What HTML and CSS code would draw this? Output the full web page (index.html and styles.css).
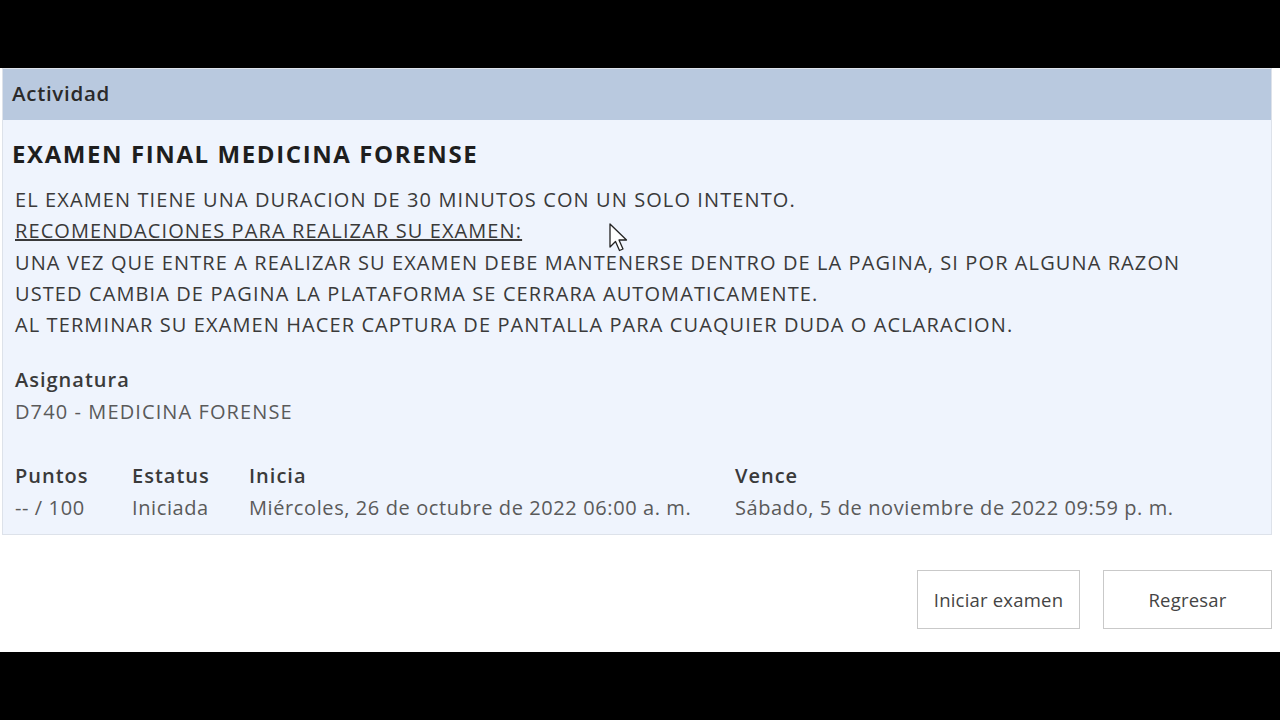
FILE: index.html
```html
<!DOCTYPE html>
<html lang="es">
<head>
    <meta charset="UTF-8">
    <meta name="viewport" content="width=device-width, initial-scale=1.0">
    <title>Actividad</title>
    <link rel="stylesheet" href="styles.css">
</head>
<body>
    <div class="bar-top"></div>

    <div class="page">
        <div class="card">
            <div class="card-header">Actividad</div>
            <div class="card-body">
                <h2 class="title">EXAMEN FINAL MEDICINA FORENSE</h2>
                <div class="description">
                    <p>EL EXAMEN TIENE UNA DURACION DE 30 MINUTOS CON UN SOLO INTENTO.</p>
                    <p><u>RECOMENDACIONES PARA REALIZAR SU EXAMEN:</u></p>
                    <p>UNA VEZ QUE ENTRE A REALIZAR SU EXAMEN DEBE MANTENERSE DENTRO DE LA PAGINA, SI POR ALGUNA RAZON<br>USTED CAMBIA DE PAGINA LA PLATAFORMA SE CERRARA AUTOMATICAMENTE.</p>
                    <p>AL TERMINAR SU EXAMEN HACER CAPTURA DE PANTALLA PARA CUAQUIER DUDA O ACLARACION.</p>
                </div>

                <div class="field">
                    <div class="label">Asignatura</div>
                    <div class="value upper">D740 - MEDICINA FORENSE</div>
                </div>

                <div class="details">
                    <div class="field col-puntos">
                        <div class="label">Puntos</div>
                        <div class="value">-- / 100</div>
                    </div>
                    <div class="field col-estatus">
                        <div class="label">Estatus</div>
                        <div class="value">Iniciada</div>
                    </div>
                    <div class="field col-inicia">
                        <div class="label">Inicia</div>
                        <div class="value">Miércoles, 26 de octubre de 2022 06:00 a. m.</div>
                    </div>
                    <div class="field">
                        <div class="label">Vence</div>
                        <div class="value">Sábado, 5 de noviembre de 2022 09:59 p. m.</div>
                    </div>
                </div>
            </div>
        </div>

        <div class="actions">
            <button class="btn btn-start">Iniciar examen</button>
            <button class="btn btn-back">Regresar</button>
        </div>

        <!-- mouse pointer visible in the capture -->
        <svg class="pointer" width="22" height="30" viewBox="0 0 22 30">
            <path d="M1 1 L1 24 L6.5 18.5 L10.5 27.5 L14 26 L10 17 L17.5 17 Z" fill="#fff" stroke="#222" stroke-width="1.3" stroke-linejoin="round"/>
        </svg>
    </div>

    <div class="bar-bottom"></div>
</body>
</html>
```

FILE: styles.css
```css
* {
    box-sizing: border-box;
    font-family: "Open Sans", "Noto Sans", Arial, sans-serif;
}

body {
    margin: 0;
    width: 1280px;
    height: 720px;
    background-color: #000;
    overflow: hidden;
}

.bar-top {
    height: 68px;
    background-color: #000;
}

.bar-bottom {
    height: 68px;
    background-color: #000;
}

.page {
    position: relative;
    height: 584px;
    background-color: #fff;
    padding: 0 8px 0 2px;
}

.card {
    border: 1px solid #dde2ea;
    background-color: #eff4fd;
}

.card-header {
    height: 51px;
    background-color: #b9c9df;
    padding: 10px 9px;
    font-size: 20.5px;
    font-weight: 600;
    letter-spacing: 0.7px;
    color: #2a2a2a;
}

.card-body {
    padding: 17px 10px 10px 9px;
}

.title {
    margin: 0 0 14px 0;
    font-size: 24px;
    font-weight: 700;
    letter-spacing: 1.6px;
    color: #1e1e1e;
}

.description {
    padding-left: 3px;
    margin-bottom: 24px;
}

.description p {
    margin: 0;
    font-size: 20px;
    letter-spacing: 1.1px;
    line-height: 31.3px;
    color: #3a3a3a;
}

.field {
    padding-left: 3px;
}

.label {
    font-size: 20px;
    font-weight: 600;
    letter-spacing: 1px;
    color: #3a3a3a;
    line-height: 32px;
}

.value {
    font-size: 20px;
    letter-spacing: 0.6px;
    color: #5a5a5a;
    line-height: 32px;
}

.value.upper {
    letter-spacing: 1.1px;
}

.details {
    display: flex;
    margin-top: 32px;
}

.col-puntos {
    width: 117px;
}

.col-estatus {
    width: 117px;
}

.col-inicia {
    width: 486px;
}

.actions {
    display: flex;
    justify-content: flex-end;
    gap: 23px;
    margin-top: 35px;
}

.btn {
    height: 59px;
    background-color: #fff;
    border: 1px solid #c9c9c9;
    font-size: 18.5px;
    letter-spacing: 0.2px;
    color: #444;
}

.btn-start {
    width: 163px;
}

.btn-back {
    width: 169px;
}

.pointer {
    position: absolute;
    left: 609px;
    top: 155px;
}
```
